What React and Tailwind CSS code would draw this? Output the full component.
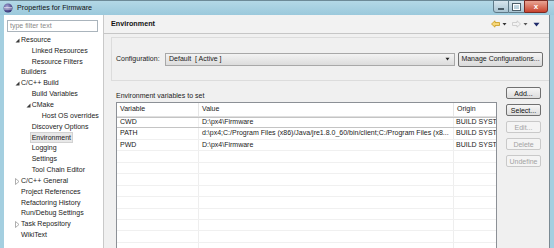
import React from "react";

const tree = [
  { t: "Resource", l: 0, a: "open" },
  { t: "Linked Resources", l: 1 },
  { t: "Resource Filters", l: 1 },
  { t: "Builders", l: 0 },
  { t: "C/C++ Build", l: 0, a: "open" },
  { t: "Build Variables", l: 1 },
  { t: "CMake", l: 1, a: "open" },
  { t: "Host OS overrides", l: 2 },
  { t: "Discovery Options", l: 1 },
  { t: "Environment", l: 1, sel: true },
  { t: "Logging", l: 1 },
  { t: "Settings", l: 1 },
  { t: "Tool Chain Editor", l: 1 },
  { t: "C/C++ General", l: 0, a: "closed" },
  { t: "Project References", l: 0 },
  { t: "Refactoring History", l: 0 },
  { t: "Run/Debug Settings", l: 0 },
  { t: "Task Repository", l: 0, a: "closed" },
  { t: "WikiText", l: 0 },
];

const pad = ["pl-[17px]", "pl-[27.7px]", "pl-[37.7px]"];

function Arrow({ a }) {
  if (a === "open")
    return (
      <svg width="5" height="5" viewBox="0 0 5 5" className="absolute left-[-6px] top-[3px]">
        <path d="M4.5 0.5 L4.5 4.5 L0.5 4.5 Z" fill="#3a3a3a" />
      </svg>
    );
  if (a === "closed")
    return (
      <svg width="5" height="7" viewBox="0 0 5 7" className="absolute left-[-6px] top-[2px]">
        <path d="M0.5 0.5 L4 3.5 L0.5 6.5 Z" fill="none" stroke="#9a9a9a" strokeWidth="0.8" />
      </svg>
    );
  return null;
}

const rows = [
  { v: "CWD", val: "D:\\px4\\Firmware", o: "BUILD SYSTEM", sel: true },
  { v: "PATH", val: "d:\\px4;C:/Program Files (x86)/Java/jre1.8.0_60/bin/client;C:/Program Files (x8...", o: "BUILD SYSTEM" },
  { v: "PWD", val: "D:\\px4\\Firmware", o: "BUILD SYSTEM" },
];

function Btn({ children, disabled }) {
  return (
    <div
      className={
        "h-[12px] w-[35px] rounded-[2px] border flex items-center justify-center text-[7px] leading-none " +
        (disabled
          ? "border-[#c9c9c9] bg-[#f4f4f4] text-[#a3a3a3]"
          : "border-[#707070] bg-gradient-to-b from-[#f6f6f6] to-[#dddddd] text-[#111]")
      }
    >
      {children}
    </div>
  );
}

export default function App() {
  return (
    <div
      className="w-[554px] h-[248px] overflow-hidden bg-[#a4cfe0] flex flex-col text-[7px] text-[#1b1b1b]"
      style={{ fontFamily: '"Liberation Sans", Arial, sans-serif' }}
    >
      {/* title bar */}
      <div className="h-[15px] flex items-start border-t border-[#6d8a97] bg-gradient-to-b from-[#b3d8e6] to-[#9bc9dc] relative shrink-0">
        <div className="flex items-center h-[14px] pl-[3px] gap-[4px]">
          <svg width="10" height="10" viewBox="0 0 10 10">
            <defs>
              <radialGradient id="eg" cx="0.4" cy="0.35" r="0.7">
                <stop offset="0" stopColor="#a9a6d8" />
                <stop offset="1" stopColor="#2c2a6e" />
              </radialGradient>
            </defs>
            <circle cx="5" cy="5" r="4.5" fill="url(#eg)" />
            <rect x="1" y="4" width="8" height="0.8" fill="#fff" opacity="0.7" />
            <rect x="1" y="5.6" width="8" height="0.8" fill="#fff" opacity="0.7" />
          </svg>
          <span className="text-[7.2px] text-[#111]">Properties for Firmware</span>
        </div>
        <div className="ml-auto mr-[6px] flex h-[13px] -mt-px">
          <div className="w-[16px] h-full border border-[#5f7a88] rounded-bl-[3px] bg-gradient-to-b from-[#d7e6ee] to-[#a9c4d2] flex items-center justify-center">
            <div className="w-[6px] h-[2px] bg-white border border-[#4b5d68] mt-[4px]" />
          </div>
          <div className="w-[15px] h-full border-y border-[#5f7a88] bg-gradient-to-b from-[#d7e6ee] to-[#a9c4d2] flex items-center justify-center">
            <div className="w-[7px] h-[6px] border-[1.5px] border-white outline outline-[#4b5d68] outline-[0.5px]" />
          </div>
          <div className="w-[24px] h-full border border-[#7a2a22] rounded-br-[3px] bg-gradient-to-b from-[#e8a494] to-[#c7412c] flex items-center justify-center">
            <span className="text-white font-bold text-[8px] leading-none">x</span>
          </div>
        </div>
      </div>

      {/* body */}
      <div className="flex-1 flex min-h-0 pl-[4px] pr-[4px]">
        <div className="flex-1 flex bg-[#f0f0f0] border-r border-[#7a8a93] min-w-0">
          {/* left pane */}
          <div className="w-[99px] shrink-0 bg-white flex flex-col overflow-hidden">
            <div className="pl-[3px] pt-[5px] pr-[5px]">
              <div className="h-[12px] border border-[#aab4bc] bg-white flex items-center pl-[2px] text-[#8a8a8a]">
                type filter text
              </div>
            </div>
            <div className="pt-[2px]">
              {tree.map((it, i) => (
                <div key={i} className={"h-[10.85px] flex items-center whitespace-nowrap " + pad[it.l]}>
                  <span
                    className={
                      "relative leading-[9px] " +
                      (it.sel ? "bg-[#e8e8e8] border border-[#d2d2d2] -ml-[2px] px-[1px]" : "")
                    }
                  >
                    <Arrow a={it.a} />
                    {it.t}
                  </span>
                </div>
              ))}
            </div>
          </div>
          <div className="w-[1px] bg-[#c9c9c9] shrink-0" />

          {/* right pane */}
          <div className="flex-1 flex flex-col min-w-0">
            <div className="h-[19px] shrink-0 flex items-center pl-[7px] pr-[9px] border-b border-[#c6c6c6] bg-[#f2f2f2]">
              <span className="font-bold text-[7.2px] text-[#111]">Environment</span>
              <div className="ml-auto flex items-center gap-[2px]">
                <svg width="9" height="8" viewBox="0 0 9 8">
                  <path d="M0.5 4 L4 0.8 L4 2.5 L8.5 2.5 L8.5 5.5 L4 5.5 L4 7.2 Z" fill="#f7d77a" stroke="#c89a1c" strokeWidth="0.8" />
                </svg>
                <svg width="5" height="4" viewBox="0 0 5 4" className="mr-[3px]">
                  <path d="M0.5 1 L4.5 1 L2.5 3.5 Z" fill="#333" />
                </svg>
                <svg width="9" height="8" viewBox="0 0 9 8">
                  <path d="M8.5 4 L5 0.8 L5 2.5 L0.5 2.5 L0.5 5.5 L5 5.5 L5 7.2 Z" fill="#f2f2f2" stroke="#c6c6c6" strokeWidth="0.8" />
                </svg>
                <svg width="5" height="4" viewBox="0 0 5 4" className="mr-[3px]">
                  <path d="M0.5 1 L4.5 1 L2.5 3.5 Z" fill="#555" />
                </svg>
                <svg width="7" height="5" viewBox="0 0 7 5">
                  <path d="M0.5 0.8 L6.5 0.8 L3.5 4.5 Z" fill="#1e2a6a" />
                </svg>
              </div>
            </div>

            <div className="flex-1 flex flex-col pl-[7px] min-h-0">
              {/* configuration group */}
              <div className="mt-[3px] h-[44px] shrink-0 border-l border-t border-b border-[#dcdcdc] flex items-center pl-[4px]">
                <span className="w-[49px]">Configuration:</span>
                <div className="w-[290px] h-[13px] border border-[#a8a8a8] bg-gradient-to-b from-[#f3f3f3] to-[#dcdcdc] flex items-center pl-[3px] pr-[4px]">
                  <span>Default&nbsp;&nbsp;[ Active ]</span>
                  <svg width="5" height="4" viewBox="0 0 5 4" className="ml-auto">
                    <path d="M0.5 0.8 L4.5 0.8 L2.5 3.5 Z" fill="#222" />
                  </svg>
                </div>
                <div className="ml-[3px] w-[85px] h-[15px] border border-[#707070] rounded-[2px] bg-gradient-to-b from-[#f4f4f4] to-[#dadada] flex items-center justify-center">
                  Manage Configurations...
                </div>
              </div>

              <div className="flex flex-1 min-h-0 pl-[5px] pt-[10px]">
                <div className="flex flex-col w-[381px] min-h-0">
                  <div className="leading-[9px]">Environment variables to set</div>
                  <div className="mt-[2px] flex-1 border border-[#8c9096] border-b-0 bg-white overflow-hidden">
                    <div className="h-[14px] flex border-b border-[#e0e0e0]">
                      <div className="w-[82px] pl-[3px] flex items-center border-r border-[#e6e6e6]">Variable</div>
                      <div className="w-[255px] pl-[3px] flex items-center border-r border-[#e6e6e6]">Value</div>
                      <div className="flex-1 pl-[3px] flex items-center">Origin</div>
                    </div>
                    {rows.map((r, i) => (
                      <div
                        key={i}
                        className={
                          "h-[11.45px] flex whitespace-nowrap " +
                          (r.sel ? "border-y border-[#c4c4c4]" : "border-b border-[#f0f0f0]")
                        }
                      >
                        <div className="w-[82px] pl-[3px] flex items-center border-r border-[#eeeeee]">{r.v}</div>
                        <div className="w-[255px] pl-[3px] flex items-center border-r border-[#eeeeee] overflow-hidden">{r.val}</div>
                        <div className="flex-1 pl-[2px] flex items-center overflow-hidden">{r.o}</div>
                      </div>
                    ))}
                    {Array.from({ length: 9 }).map((_, i) => (
                      <div key={"e" + i} className="h-[11.45px] flex border-b border-[#f0f0f0]">
                        <div className="w-[82px] border-r border-[#eeeeee]" />
                        <div className="w-[255px] border-r border-[#eeeeee]" />
                        <div className="flex-1" />
                      </div>
                    ))}
                  </div>
                </div>
                <div className="ml-[9px] flex flex-col gap-[5px] pt-[-4px] -mt-[4px]">
                  <Btn>Add...</Btn>
                  <Btn>Select...</Btn>
                  <Btn disabled>Edit...</Btn>
                  <Btn disabled>Delete</Btn>
                  <Btn disabled>Undefine</Btn>
                </div>
              </div>
            </div>
          </div>
        </div>
      </div>
    </div>
  );
}
